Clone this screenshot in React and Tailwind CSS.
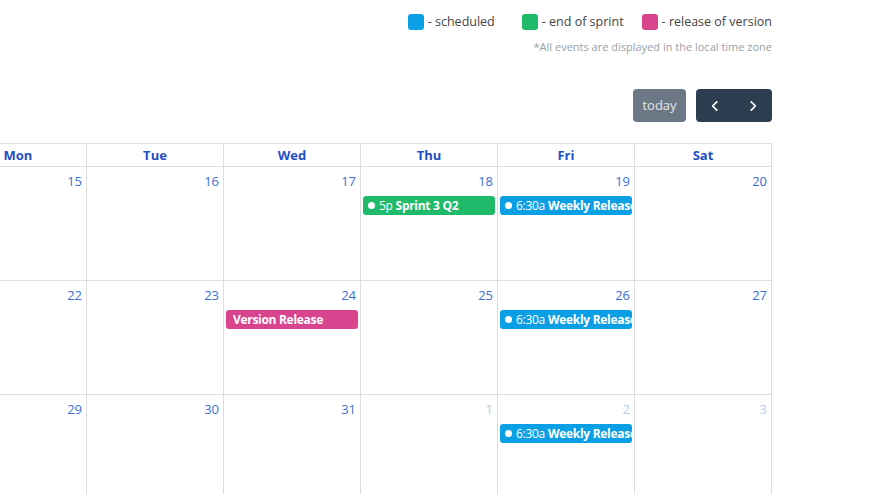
import React from "react";

const font = { fontFamily: '"Open Sans", "Noto Sans", sans-serif' };

const days = ["Sun", "Mon", "Tue", "Wed", "Thu", "Fri", "Sat"];

const colors = {
  scheduled: "bg-[#0b9fe6]",
  sprint: "bg-[#1fba6a]",
  release: "bg-[#d9448f]",
};

const weekly = { type: "scheduled", time: "6:30a", title: "Weekly Release Rollout" };

const weeks = [
  [
    { d: 14 },
    { d: 15 },
    { d: 16 },
    { d: 17 },
    { d: 18, events: [{ type: "sprint", time: "5p", title: "Sprint 3 Q2" }] },
    { d: 19, events: [weekly] },
    { d: 20 },
  ],
  [
    { d: 21 },
    { d: 22 },
    { d: 23 },
    { d: 24, events: [{ type: "release", title: "Version Release", allDay: true }] },
    { d: 25 },
    { d: 26, events: [weekly] },
    { d: 27 },
  ],
  [
    { d: 28 },
    { d: 29 },
    { d: 30 },
    { d: 31 },
    { d: 1, other: true },
    { d: 2, other: true, events: [weekly] },
    { d: 3, other: true },
  ],
];

const Legend = ({ type, label, className = "" }) => (
  <div className={`flex items-center gap-[4px] ${className}`}>
    <span className={`w-[16px] h-[16px] rounded-[3px] ${colors[type]}`} />
    <span className="text-[12.5px] text-[#444]">- {label}</span>
  </div>
);

const Event = ({ ev }) => (
  <div
    className={`mx-[2px] h-[19px] rounded-[3px] flex items-center overflow-hidden whitespace-nowrap text-white text-[12px] tracking-[-0.3px] leading-none ${colors[ev.type]} ${
      ev.allDay ? "pl-[7px]" : "pl-[5px]"
    }`}
  >
    {!ev.allDay && (
      <span className="w-[7px] h-[7px] rounded-full bg-white mr-[4px] shrink-0" />
    )}
    {ev.time && <span className="mr-[3px]">{ev.time}</span>}
    <span className="font-bold">{ev.title}</span>
  </div>
);

export default function App() {
  return (
    <div className="w-[870px] h-[494px] overflow-hidden bg-white" style={font}>
      <div className="ml-[-188px] w-[960px]">
        {/* legend */}
        <div className="flex justify-end pt-[13px]">
          <Legend type="scheduled" label="scheduled" />
          <Legend type="sprint" label="end of sprint" className="ml-[27px]" />
          <Legend type="release" label="release of version" className="ml-[18px]" />
        </div>
        <div className="flex justify-end mt-[7px] text-[11px] text-[#9aa0a6]">
          *All events are displayed in the local time zone
        </div>

        {/* toolbar */}
        <div className="flex justify-end gap-[10px] mt-[34px]">
          <button className="w-[53px] h-[33px] rounded-[4px] bg-[#6c7885] text-[#e4e7ea] text-[13px]">
            today
          </button>
          <div className="flex w-[76px] h-[33px] rounded-[4px] bg-[#2c3e50] text-white">
            <button className="flex-1 flex items-center justify-center">
              <svg width="14" height="14" viewBox="0 0 24 24" fill="none" stroke="currentColor" strokeWidth="3" strokeLinecap="round" strokeLinejoin="round">
                <path d="M15 5l-7 7 7 7" />
              </svg>
            </button>
            <button className="flex-1 flex items-center justify-center">
              <svg width="14" height="14" viewBox="0 0 24 24" fill="none" stroke="currentColor" strokeWidth="3" strokeLinecap="round" strokeLinejoin="round">
                <path d="M9 5l7 7-7 7" />
              </svg>
            </button>
          </div>
        </div>

        {/* calendar */}
        <div className="mt-[21px] border-t border-l border-[#ddd]">
          <div className="grid grid-cols-7">
            {days.map((d) => (
              <div
                key={d}
                className="h-[23px] border-r border-b border-[#ddd] flex items-center justify-center pt-[1px] text-[13px] font-bold text-[#1f4fc7]"
              >
                {d}
              </div>
            ))}
          </div>
          {weeks.map((w, i) => (
            <div key={i} className="grid grid-cols-7">
              {w.map((c, j) => (
                <div key={j} className="h-[114px] border-r border-b border-[#ddd]">
                  <div
                    className={`text-right pr-[4px] pt-[4px] text-[13px] leading-[20px] ${
                      c.other ? "text-[#b8c8ef]" : "text-[#3b6fd6]"
                    }`}
                  >
                    {c.d}
                  </div>
                  <div className="mt-[5px] flex flex-col gap-[2px]">
                    {(c.events || []).map((ev, k) => (
                      <Event key={k} ev={ev} />
                    ))}
                  </div>
                </div>
              ))}
            </div>
          ))}
        </div>
      </div>
    </div>
  );
}
